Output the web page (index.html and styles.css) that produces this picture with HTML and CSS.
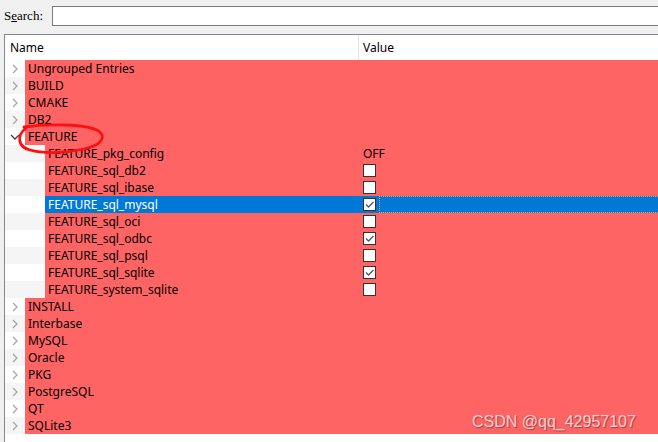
FILE: index.html
```html
<!DOCTYPE html>
<html>
<head>
<meta charset="utf-8">
<link rel="stylesheet" href="styles.css">
</head>
<body>
<div class="search">
  <label class="search-label">S<u>e</u>arch:</label>
  <div class="search-input"></div>
</div>
<div class="tree">
  <div class="header">
    <div class="hcell name-col">Name</div>
    <div class="hcell value-col">Value</div>
  </div>
  <div class="rows">
    <div class="row"><div class="name"><div class="branch"><svg class="chev" viewBox="0 0 6 10"><path d="M1 1 L5 5 L1 9"/></svg></div><div class="label">Ungrouped Entries</div></div><div class="value"></div></div>
    <div class="row alt"><div class="name"><div class="branch"><svg class="chev" viewBox="0 0 6 10"><path d="M1 1 L5 5 L1 9"/></svg></div><div class="label">BUILD</div></div><div class="value"></div></div>
    <div class="row"><div class="name"><div class="branch"><svg class="chev" viewBox="0 0 6 10"><path d="M1 1 L5 5 L1 9"/></svg></div><div class="label">CMAKE</div></div><div class="value"></div></div>
    <div class="row alt"><div class="name"><div class="branch"><svg class="chev" viewBox="0 0 6 10"><path d="M1 1 L5 5 L1 9"/></svg></div><div class="label">DB2</div></div><div class="value"></div></div>
    <div class="row"><div class="name"><div class="branch"><svg class="chev open" viewBox="0 0 10 6"><path d="M1 1 L5 5 L9 1"/></svg></div><div class="label">FEATURE</div></div><div class="value"></div></div>
    <div class="row alt child"><div class="name"><div class="branch"></div><div class="label">FEATURE_pkg_config</div></div><div class="value"><span class="vtext">OFF</span></div></div>
    <div class="row child"><div class="name"><div class="branch"></div><div class="label">FEATURE_sql_db2</div></div><div class="value"><span class="cb"></span></div></div>
    <div class="row alt child"><div class="name"><div class="branch"></div><div class="label">FEATURE_sql_ibase</div></div><div class="value"><span class="cb"></span></div></div>
    <div class="row child selected"><div class="name"><div class="branch"></div><div class="label">FEATURE_sql_mysql</div></div><div class="value"><span class="cb"><svg viewBox="0 0 11 11"><path d="M2 5.5 L4.5 8 L9.5 3"/></svg></span><span class="focus"></span></div></div>
    <div class="row alt child"><div class="name"><div class="branch"></div><div class="label">FEATURE_sql_oci</div></div><div class="value"><span class="cb"></span></div></div>
    <div class="row child"><div class="name"><div class="branch"></div><div class="label">FEATURE_sql_odbc</div></div><div class="value"><span class="cb"><svg viewBox="0 0 11 11"><path d="M2 5.5 L4.5 8 L9.5 3"/></svg></span></div></div>
    <div class="row alt child"><div class="name"><div class="branch"></div><div class="label">FEATURE_sql_psql</div></div><div class="value"><span class="cb"></span></div></div>
    <div class="row child"><div class="name"><div class="branch"></div><div class="label">FEATURE_sql_sqlite</div></div><div class="value"><span class="cb"><svg viewBox="0 0 11 11"><path d="M2 5.5 L4.5 8 L9.5 3"/></svg></span></div></div>
    <div class="row alt child"><div class="name"><div class="branch"></div><div class="label">FEATURE_system_sqlite</div></div><div class="value"><span class="cb"></span></div></div>
    <div class="row"><div class="name"><div class="branch"><svg class="chev" viewBox="0 0 6 10"><path d="M1 1 L5 5 L1 9"/></svg></div><div class="label">INSTALL</div></div><div class="value"></div></div>
    <div class="row alt"><div class="name"><div class="branch"><svg class="chev" viewBox="0 0 6 10"><path d="M1 1 L5 5 L1 9"/></svg></div><div class="label">Interbase</div></div><div class="value"></div></div>
    <div class="row"><div class="name"><div class="branch"><svg class="chev" viewBox="0 0 6 10"><path d="M1 1 L5 5 L1 9"/></svg></div><div class="label">MySQL</div></div><div class="value"></div></div>
    <div class="row alt"><div class="name"><div class="branch"><svg class="chev" viewBox="0 0 6 10"><path d="M1 1 L5 5 L1 9"/></svg></div><div class="label">Oracle</div></div><div class="value"></div></div>
    <div class="row"><div class="name"><div class="branch"><svg class="chev" viewBox="0 0 6 10"><path d="M1 1 L5 5 L1 9"/></svg></div><div class="label">PKG</div></div><div class="value"></div></div>
    <div class="row alt"><div class="name"><div class="branch"><svg class="chev" viewBox="0 0 6 10"><path d="M1 1 L5 5 L1 9"/></svg></div><div class="label">PostgreSQL</div></div><div class="value"></div></div>
    <div class="row"><div class="name"><div class="branch"><svg class="chev" viewBox="0 0 6 10"><path d="M1 1 L5 5 L1 9"/></svg></div><div class="label">QT</div></div><div class="value"></div></div>
    <div class="row alt"><div class="name"><div class="branch"><svg class="chev" viewBox="0 0 6 10"><path d="M1 1 L5 5 L1 9"/></svg></div><div class="label">SQLite3</div></div><div class="value"></div></div>
  </div>
</div>
<svg class="annotation" viewBox="0 0 120 40" width="120" height="40">
  <path d="M24 5 C45 2, 88 1, 100 10 C107 17, 98 24, 84 27 C66 31, 44 32, 30 28 C18 25, 16 14, 26 6"/>
</svg>
<div class="watermark">CSDN @qq_42957107</div>
</body>
</html>
```
FILE: styles.css
```css
html, body {
  margin: 0;
  padding: 0;
  height: 100%;
  overflow: hidden;
}
body {
  background: #f0f0f0;
  font-family: "Noto Sans", "Liberation Sans", sans-serif;
  font-size: 12px;
  color: #000;
}
.search {
  display: flex;
  align-items: center;
  padding: 6px 0 0 4px;
  height: 20px;
}
.search-label {
  font-family: "Liberation Serif", serif;
  font-size: 13px;
  width: 48px;
  line-height: 20px;
}
.search-label u {
  text-decoration-thickness: 1px;
}
.search-input {
  flex: 1;
  height: 18px;
  background: #fff;
  border: 1px solid #7a7a7a;
  margin-right: -10px;
}
.tree {
  margin: 8px 0 0 4px;
  border: 1px solid #828790;
  border-right: none;
  background: #fff;
  height: 420px;
}
.header {
  display: grid;
  grid-template-columns: 354px 1fr;
  height: 25px;
}
.hcell {
  line-height: 25px;
}
.name-col {
  padding-left: 5px;
  border-right: 1px solid #e5e5e5;
}
.value-col {
  padding-left: 4px;
}
.rows {
  display: flex;
  flex-direction: column;
}
.row {
  display: grid;
  grid-template-columns: 354px 1fr;
  height: 17px;
  line-height: 17px;
}
.name {
  display: flex;
}
.branch {
  width: 20px;
  background: #fff;
  display: flex;
  align-items: center;
}
.row.alt .branch {
  background: #f5f5f5;
}
.row.child .branch {
  width: 40px;
}
.chev {
  width: 6px;
  height: 10px;
  margin-left: 7px;
  fill: none;
  stroke: #a6a6a6;
  stroke-width: 1.3;
}
.chev.open {
  width: 10px;
  height: 6px;
  margin-left: 5px;
  stroke: #404040;
}
.label {
  flex: 1;
  background: #ff6464;
  padding-left: 3px;
  white-space: nowrap;
}
.value {
  background: #ff6464;
  padding-left: 4px;
  display: flex;
  align-items: center;
}
.vtext {
  line-height: 17px;
}
.cb {
  width: 11px;
  height: 11px;
  border: 1px solid #333;
  background: #fff;
  display: flex;
}
.cb svg {
  width: 11px;
  height: 11px;
  fill: none;
  stroke: #555;
  stroke-width: 1.3;
}
.row.selected .label,
.row.selected .value {
  background: #0078d7;
  color: #fff;
}
.focus {
  flex: 1;
  align-self: stretch;
  margin-left: 3px;
  border: 1px dotted #f0a040;
  border-right: none;
}
.annotation {
  position: absolute;
  left: 0;
  top: 122px;
  fill: none;
  stroke: #ff1010;
  stroke-width: 2.8;
  stroke-linecap: round;
}
.watermark {
  position: absolute;
  left: 472px;
  top: 413px;
  font-family: "Liberation Sans", sans-serif;
  font-size: 16px;
  color: rgba(255, 232, 232, 0.85);
  text-shadow: 1px 1px 1px rgba(90, 40, 40, 0.6);
}
```
